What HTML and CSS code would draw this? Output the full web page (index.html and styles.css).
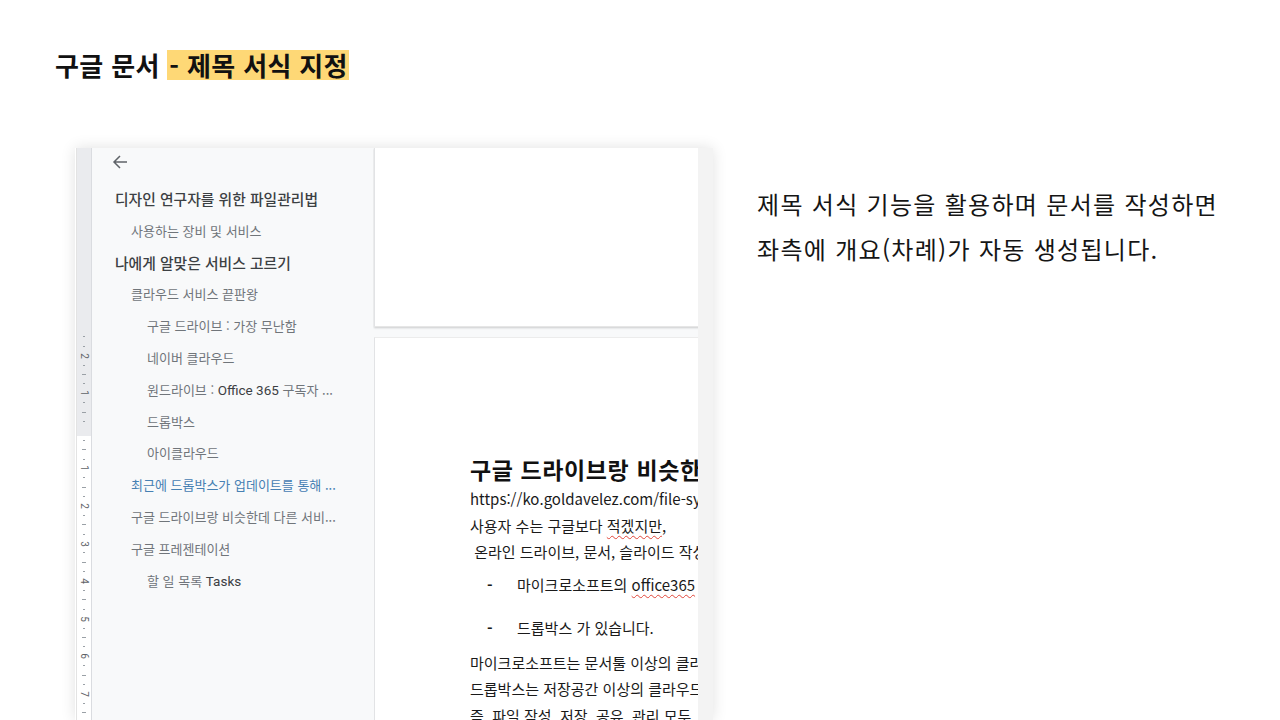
FILE: index.html
```html
<!DOCTYPE html>
<html lang="ko">
<head>
<meta charset="utf-8">
<link rel="stylesheet" href="styles.css">
</head>
<body>
<div class="slide">
  <h1 class="title">구글 문서 <span class="hl">- 제목 서식 지정</span></h1>
  <div class="row">
    <div class="shot">
      <div class="ruler">
        <div class="ruler-blank"></div>
        <div class="ruler-cells gray">
          <div class="cell"><i class="tick"></i></div>
          <div class="cell"><i class="tick"></i></div>
          <div class="cell"><b class="num">2</b></div>
          <div class="cell"><i class="tick"></i></div>
          <div class="cell"><i class="tick long"></i></div>
          <div class="cell"><i class="tick"></i></div>
          <div class="cell"><b class="num">1</b></div>
          <div class="cell"><i class="tick"></i></div>
          <div class="cell"><i class="tick long"></i></div>
          <div class="cell"><i class="tick"></i></div>
          <div class="cell"></div>
        </div>
        <div class="ruler-cells white">
          <div class="cell"><i class="tick"></i></div>
          <div class="cell"><i class="tick long"></i></div>
          <div class="cell"><i class="tick"></i></div>
          <div class="cell"><b class="num">1</b></div>
          <div class="cell"><i class="tick"></i></div>
          <div class="cell"><i class="tick long"></i></div>
          <div class="cell"><i class="tick"></i></div>
          <div class="cell"><b class="num">2</b></div>
          <div class="cell"><i class="tick"></i></div>
          <div class="cell"><i class="tick long"></i></div>
          <div class="cell"><i class="tick"></i></div>
          <div class="cell"><b class="num">3</b></div>
          <div class="cell"><i class="tick"></i></div>
          <div class="cell"><i class="tick long"></i></div>
          <div class="cell"><i class="tick"></i></div>
          <div class="cell"><b class="num">4</b></div>
          <div class="cell"><i class="tick"></i></div>
          <div class="cell"><i class="tick long"></i></div>
          <div class="cell"><i class="tick"></i></div>
          <div class="cell"><b class="num">5</b></div>
          <div class="cell"><i class="tick"></i></div>
          <div class="cell"><i class="tick long"></i></div>
          <div class="cell"><i class="tick"></i></div>
          <div class="cell"><b class="num">6</b></div>
          <div class="cell"><i class="tick"></i></div>
          <div class="cell"><i class="tick long"></i></div>
          <div class="cell"><i class="tick"></i></div>
          <div class="cell"><b class="num">7</b></div>
          <div class="cell"><i class="tick"></i></div>
          <div class="cell"><i class="tick long"></i></div>
          <div class="cell"><i class="tick"></i></div>
        </div>
      </div>
      <div class="outline">
        <div class="back">
          <svg width="18" height="18" viewBox="0 0 18 18"><path d="M16 9H3M9 3L3 9l6 6" fill="none" stroke="#5f6368" stroke-width="1.5"/></svg>
        </div>
        <ul class="items">
          <li class="lv1">디자인 연구자를 위한 파일관리법</li>
          <li class="lv2">사용하는 장비 및 서비스</li>
          <li class="lv1">나에게 알맞은 서비스 고르기</li>
          <li class="lv2">클라우드 서비스 끝판왕</li>
          <li class="lv3">구글 드라이브 : 가장 무난함</li>
          <li class="lv3">네이버 클라우드</li>
          <li class="lv3">원드라이브 : <span class="lat">Office 365</span> 구독자 ...</li>
          <li class="lv3">드롭박스</li>
          <li class="lv3">아이클라우드</li>
          <li class="lv2 active">최근에 드롭박스가 업데이트를 통해 ...</li>
          <li class="lv2">구글 드라이브랑 비슷한데 다른 서비...</li>
          <li class="lv2">구글 프레젠테이션</li>
          <li class="lv3">할 일 목록 <span class="lat">Tasks</span></li>
        </ul>
      </div>
      <div class="doc">
        <div class="page page1"></div>
        <div class="page page2">
          <h2 class="dh">구글 드라이브랑 비슷한데 다른 서비스</h2>
          <p class="dp">https://ko.goldavelez.com/file-sync-services</p>
          <p class="dp">사용자 수는 구글보다 <span class="sq">적겠지만</span>,</p>
          <p class="dp">&nbsp;온라인 드라이브, 문서, 슬라이드 작성 등</p>
          <div class="bul b1"><span class="dash">-</span><span>마이크로소프트의 <span class="sq">office365</span></span></div>
          <div class="bul b2"><span class="dash">-</span><span>드롭박스 가 있습니다.</span></div>
          <p class="dp p7">마이크로소프트는 문서툴 이상의 클라우드</p>
          <p class="dp">드롭박스는 저장공간 이상의 클라우드를</p>
          <p class="dp">즉, 파일 작성, 저장, 공유, 관리 모두</p>
        </div>
      </div>
      <div class="scroll"></div>
    </div>
    <div class="desc">
      <p>제목 서식 기능을 활용하며 문서를 작성하면</p>
      <p>좌측에 개요(차례)가 자동 생성됩니다.</p>
    </div>
  </div>
</div>
</body>
</html>
```

FILE: styles.css
```css
* { box-sizing: border-box; }
html, body { margin: 0; padding: 0; background: #fff; }
body {
  width: 1280px; height: 720px; overflow: hidden;
  font-family: "Noto Sans CJK KR", "Noto Sans", sans-serif;
}
.slide { width: 1280px; height: 720px; }
.title {
  margin: 0; padding: 50px 0 0 55px;
  font-size: 26px; font-weight: 700; line-height: 30px; color: #111;
  letter-spacing: 0.35px; height: 80px;
}
.hl { background: #fed876; padding: 0 1px 0 2px; display: inline-block; height: 30px; }
.row { display: flex; margin-top: 68px; padding-left: 75px; }
.shot {
  width: 638px; height: 572px; display: flex; overflow: hidden;
  background: #fff;
  box-shadow: 0 0 14px rgba(0,0,0,0.12);
}
.ruler {
  width: 16px; flex: none; display: flex; flex-direction: column;
  border-left: 1px solid #e3e3e3; border-right: 1px solid #dadce0;
  margin-left: 1px;
}
.ruler-blank { height: 184.3px; background: #eaebee; flex: none; }
.ruler-cells { display: flex; flex-direction: column; flex: none; }
.ruler-cells.gray { background: #eaebee; }
.ruler-cells.white { background: #fff; }
.cell { height: 9.4px; display: flex; align-items: center; justify-content: center; flex: none; }
.tick { display: block; width: 2px; height: 1px; background: #9aa0a6; }
.tick.long { width: 4px; }
.num {
  display: block; font-family: "Roboto", sans-serif; font-weight: 400;
  font-size: 10px; line-height: 10px; color: #5f6368; transform: rotate(90deg);
}
.outline {
  width: 281px; flex: none; background: #f8f9fa; padding-top: 2px;
  position: relative;
}
.back { height: 24px; padding-left: 19px; display: flex; align-items: center; }
.items { list-style: none; margin: 9px 0 0; padding: 0; }
.items li {
  height: 31.8px; line-height: 31.8px; white-space: nowrap;
  font-size: 13px; color: #70757a; position: relative;
}
.items .lv1 { padding-left: 23px; font-size: 14.8px; color: #3c4043; font-weight: 500; }
.items .lv2 { padding-left: 39px; }
.items .lv3 { padding-left: 55px; }
.items .lat { font-family: "Roboto", sans-serif; color: #3c4043; font-size: 13.5px; }
.items .active { color: #4680b3; }
.items .active::before {
  content: ""; position: absolute; left: -40px; top: 15px;
  width: 11px; height: 2px; background: #1d4f73;
}
.doc {
  width: 325px; flex: none; background: #f8f9fa; overflow: hidden;
  display: flex; flex-direction: column; gap: 10px;
}
.page {
  margin-left: 1px; width: 420px; background: #fff;
  border-left: 1px solid #e2e3e5; flex: none;
}
.page1 { height: 179px; box-shadow: 0 1px 2px rgba(0,0,0,0.18); border-bottom: 1px solid #e6e6e6; }
.page2 { height: 500px; padding: 116px 0 0 95px; border-top: 1px solid #ececec; }
.dh {
  margin: 0; font-size: 23px; font-weight: 700; line-height: 30px;
  color: #111; white-space: nowrap; letter-spacing: 0.6px;
}
.dp {
  margin: 0; font-size: 15px; line-height: 26.5px; color: #1a1a1a; white-space: nowrap;
}
.dh + .dp { margin-top: 2px; }
.sq {
  text-decoration: underline wavy #e0463a; text-decoration-thickness: 1px;
  text-underline-offset: 3px;
}
.bul {
  display: flex; font-size: 15px; line-height: 26.5px; color: #1a1a1a; white-space: nowrap;
}
.bul .dash { width: 47px; padding-left: 17px; flex: none; font-weight: 700; }
.b1 { margin-top: 6px; }
.b2 { margin-top: 16.5px; }
.p7 { margin-top: 8.5px; }
.scroll {
  width: 16px; flex: none; background: #f3f3f3;
  border-right: 1px solid #cfcfcf;
}
.desc { margin-left: 44px; padding-top: 33px; }
.desc p {
  margin: 0; font-size: 24px; line-height: 45px; color: #151515;
  white-space: nowrap; letter-spacing: 1.3px;
}
```
